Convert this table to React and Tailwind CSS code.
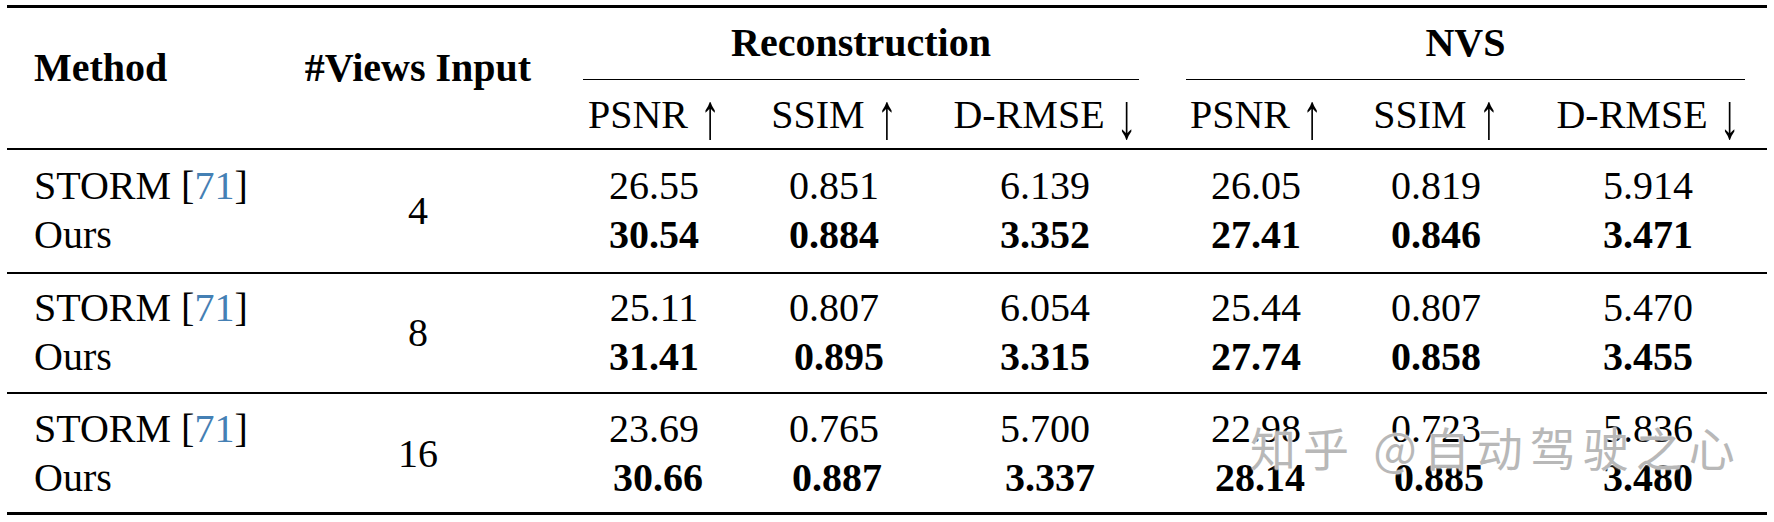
import React from 'react';

const groups = [
  {
    views: '4',
    storm: ['26.55', '0.851', '6.139', '26.05', '0.819', '5.914'],
    ours: ['30.54', '0.884', '3.352', '27.41', '0.846', '3.471'],
    pad: 'pt-[11px] pb-[13px]',
  },
  {
    views: '8',
    storm: ['25.11', '0.807', '6.054', '25.44', '0.807', '5.470'],
    ours: ['31.41', ['0.895', 'pl-[10px]'], '3.315', '27.74', '0.858', '3.455'],
    pad: 'pt-[9px] pb-[11px] border-t-2',
  },
  {
    views: '16',
    storm: ['23.69', '0.765', '5.700', '22.98', '0.723', '5.836'],
    ours: [
      ['30.66', 'pl-[8px]'],
      ['0.887', 'pl-[6px]'],
      ['3.337', 'pl-[10px]'],
      ['28.14', 'pl-[8px]'],
      ['0.885', 'pl-[6px]'],
      '3.480',
    ],
    pad: 'pt-[10px] pb-[10px] border-t-2',
  },
];

// left margin of each metric column, so that each sits on its own centre
const colMargin = ['ml-[56px]', 'ml-0', 'ml-[31px]', 'ml-[31px]', 'ml-0', 'ml-[32px]'];

function Arrow({ children }) {
  return (
    <span className="ml-[12px] inline-block text-black scale-y-[1.6] translate-y-[2px]">
      {children}
    </span>
  );
}

function MetricRow({ values, bold }) {
  return (
    <div className={`flex h-[49px] items-center ${bold ? 'font-bold' : ''}`}>
      {values.map((v, i) => {
        const [text, shift] = Array.isArray(v) ? v : [v, ''];
        return (
          <div key={i} className={`w-[180px] flex justify-center whitespace-nowrap ${colMargin[i]} ${shift}`}>
            {text}
          </div>
        );
      })}
    </div>
  );
}

const headers = [
  <>PSNR<Arrow>↑</Arrow></>,
  <>SSIM<Arrow>↑</Arrow></>,
  <>D-RMSE<Arrow>↓</Arrow></>,
  <>PSNR<Arrow>↑</Arrow></>,
  <>SSIM<Arrow>↑</Arrow></>,
  <>D-RMSE<Arrow>↓</Arrow></>,
];

export default function App() {
  return (
    <div className="w-[1774px] h-[522px] bg-white pt-[5px] font-['Liberation_Serif',serif] text-[40px] leading-[49px] text-black relative overflow-hidden">
      <div className="ml-[7px] w-[1760px] border-t-[3px] border-b-[3px] border-black">
        {/* Header */}
        <div className="flex border-b-2 border-black">
          <div className="w-[321px] pl-[27px] pt-[35px] font-bold">Method</div>
          <div className="w-[180px] pt-[35px] font-bold flex justify-center whitespace-nowrap">#Views Input</div>
          <div className="flex flex-col pt-[10px] pb-[9px]">
            <div className="flex">
              <div className="ml-[75px] w-[556px] text-center font-bold pb-[12px] border-b border-black">
                Reconstruction
              </div>
              <div className="ml-[47px] w-[559px] text-center font-bold pb-[12px] border-b border-black">
                NVS
              </div>
            </div>
            <div className="pt-[10px]">
              <MetricRow values={headers} />
            </div>
          </div>
        </div>

        {/* Body */}
        {groups.map((g, gi) => (
          <div key={gi} className={`flex border-black ${g.pad}`}>
            <div className="w-[321px] pl-[27px] flex flex-col">
              <div className="h-[49px] whitespace-nowrap">
                STORM [<span className="text-[#4580b4]">71</span>]
              </div>
              <div className="h-[49px]">Ours</div>
            </div>
            <div className="w-[180px] flex items-center justify-center">{g.views}</div>
            <div className="flex flex-col">
              <MetricRow values={g.storm} />
              <MetricRow values={g.ours} bold />
            </div>
          </div>
        ))}
      </div>

      {/* Watermark */}
      <div className="absolute left-[1250px] top-[420px] font-['Noto_Sans_CJK_SC',sans-serif] text-[46px] leading-[52px] tracking-[7px] text-[#b8b8b8] whitespace-nowrap [text-shadow:0_0_2px_#fff,0_0_2px_#fff]">
        知乎 @自动驾驶之心
      </div>
    </div>
  );
}
